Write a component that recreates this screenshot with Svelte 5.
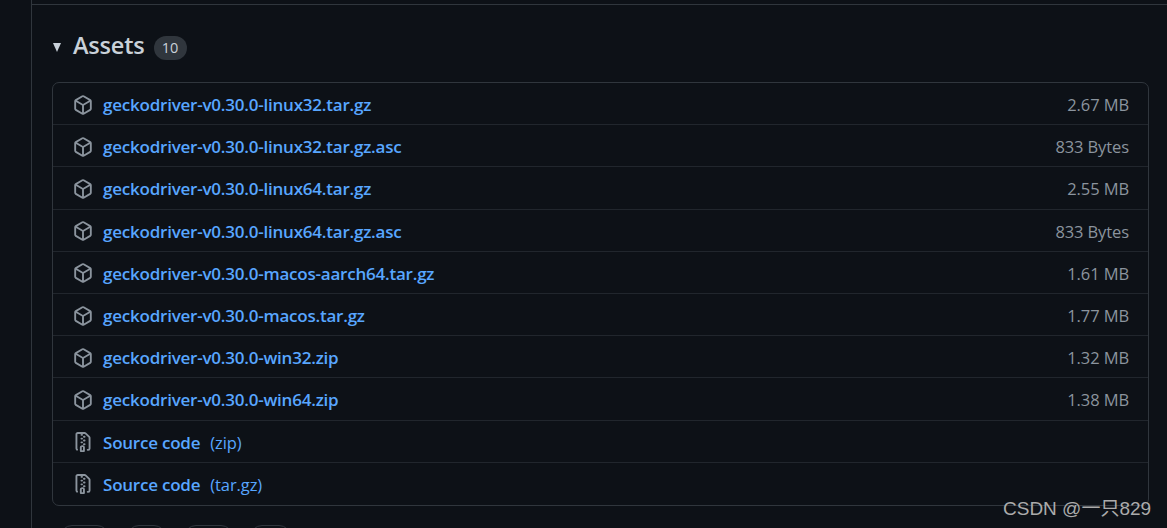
<script>
  const pkg = "M8.878.392a1.75 1.75 0 0 0-1.756 0l-5.25 3.045A1.75 1.75 0 0 0 1 4.951v6.098c0 .624.332 1.2.872 1.514l5.25 3.045a1.75 1.75 0 0 0 1.756 0l5.25-3.045c.54-.313.872-.89.872-1.514V4.951c0-.624-.332-1.2-.872-1.514L8.878.392ZM7.875 1.69a.25.25 0 0 1 .25 0l4.63 2.685L8 7.133 3.245 4.375l4.63-2.685ZM2.5 5.677v5.372c0 .09.047.171.125.216l4.625 2.683V8.432Zm6.25 8.271 4.625-2.683a.25.25 0 0 0 .125-.216V5.677L8.75 8.432Z";
  const zip = "M3.5 1.75v11.5c0 .09.048.173.126.217a.75.75 0 0 1-.752 1.298A1.748 1.748 0 0 1 2 13.25V1.75C2 .784 2.784 0 3.75 0h5.586c.464 0 .909.185 1.237.513l2.914 2.914c.329.328.513.773.513 1.237v8.586A1.75 1.75 0 0 1 12.25 15h-.5a.75.75 0 0 1 0-1.5h.5a.25.25 0 0 0 .25-.25V4.664a.25.25 0 0 0-.073-.177L9.513 1.573a.25.25 0 0 0-.177-.073H7.25a.75.75 0 0 1 0 1.5h-.5a.75.75 0 0 1 0-1.5h-3a.25.25 0 0 0-.25.25Zm3.75 8.75h.5c.966 0 1.75.784 1.75 1.75v3a.75.75 0 0 1-.75.75h-2.5a.75.75 0 0 1-.75-.75v-3c0-.966.784-1.75 1.75-1.75ZM6 5.25a.75.75 0 0 1 .75-.75h.5a.75.75 0 0 1 0 1.5h-.5A.75.75 0 0 1 6 5.25Zm.75 2.25h.5a.75.75 0 0 1 0 1.5h-.5a.75.75 0 0 1 0-1.5ZM8 6.75A.75.75 0 0 1 8.75 6h.5a.75.75 0 0 1 0 1.5h-.5A.75.75 0 0 1 8 6.75ZM8.75 3h.5a.75.75 0 0 1 0 1.5h-.5a.75.75 0 0 1 0-1.5ZM8 9.75A.75.75 0 0 1 8.75 9h.5a.75.75 0 0 1 0 1.5h-.5A.75.75 0 0 1 8 9.75Zm-1 2.5v2.25h1v-2.25a.25.25 0 0 0-.25-.25h-.5a.25.25 0 0 0-.25.25Z";
  const assets = [
    ["geckodriver-v0.30.0-linux32.tar.gz", "2.67 MB"],
    ["geckodriver-v0.30.0-linux32.tar.gz.asc", "833 Bytes"],
    ["geckodriver-v0.30.0-linux64.tar.gz", "2.55 MB"],
    ["geckodriver-v0.30.0-linux64.tar.gz.asc", "833 Bytes"],
    ["geckodriver-v0.30.0-macos-aarch64.tar.gz", "1.61 MB"],
    ["geckodriver-v0.30.0-macos.tar.gz", "1.77 MB"],
    ["geckodriver-v0.30.0-win32.zip", "1.32 MB"],
    ["geckodriver-v0.30.0-win64.zip", "1.38 MB"]
  ];
  const sources = ["(zip)", "(tar.gz)"];
</script>

<div class="page">
  <main class="timeline">
    <div class="rule"></div>
    <section class="content">
      <h2 class="heading">
        <span class="caret"></span>
        <span class="title">Assets</span>
        <span class="counter">10</span>
      </h2>
      <ul class="box">
        {#each assets as [name, size]}
          <li class="row">
            <svg class="icon" viewBox="0 0 16 16" width="20" height="20"><path fill-rule="evenodd" d={pkg} /></svg>
            <span class="link">{name}</span>
            <span class="size">{size}</span>
          </li>
        {/each}
        {#each sources as ext}
          <li class="row">
            <svg class="icon" viewBox="0 0 16 16" width="20" height="20"><path fill-rule="evenodd" d={zip} /></svg>
            <span class="link">Source code</span>
            <span class="ext">{ext}</span>
          </li>
        {/each}
      </ul>
      <div class="reactions">
        <span class="pill p1"></span>
        <span class="pill p2"></span>
        <span class="pill p3"></span>
        <span class="pill p4"></span>
      </div>
    </section>
  </main>
  <div class="watermark">CSDN @一只829</div>
</div>

<style>
  :global(body) {
    margin: 0;
    background: #0d1117;
  }
  .page {
    position: relative;
    width: 1167px;
    height: 528px;
    overflow: hidden;
    background: #0d1117;
    font-family: "Open Sans", "Noto Sans", sans-serif;
    box-sizing: border-box;
    padding-left: 31px;
  }
  .timeline {
    height: 100%;
    padding-top: 4px;
    border-left: 1px solid #30363d;
    box-sizing: border-box;
  }
  .rule {
    height: 1px;
    background: #30363d;
  }
  .content {
    width: 1097px;
    margin-left: 20px;
  }
  .heading {
    display: flex;
    align-items: center;
    height: 30px;
    margin: 26px 0 21px;
    font-weight: 600;
    font-size: 23.5px;
    color: #c9d1d9;
  }
  .caret {
    width: 0;
    height: 0;
    margin: 3px 0 0 1px;
    border-left: 4.5px solid transparent;
    border-right: 4.5px solid transparent;
    border-top: 9px solid #c9d1d9;
  }
  .title {
    margin-left: 12px;
    margin-top: -2px;
    letter-spacing: -0.2px;
  }
  .counter {
    margin-left: 9px;
    margin-top: 3px;
    min-width: 33px;
    height: 24px;
    border-radius: 12px;
    background: #30363d;
    color: #c9d1d9;
    font-size: 14.5px;
    font-weight: 400;
    line-height: 24px;
    text-align: center;
  }
  .box {
    list-style: none;
    margin: 0;
    padding: 0;
    border: 1px solid #30363d;
    border-radius: 7px;
    height: 424px;
    box-sizing: border-box;
  }
  .row {
    display: flex;
    align-items: center;
    height: 42.2px;
    box-sizing: border-box;
    padding: 2px 19px 0 20px;
    border-top: 1px solid #21262d;
  }
  .row:first-child {
    border-top: 0;
    height: 41.2px;
  }
  .icon {
    fill: #8b949e;
    flex: none;
    margin-right: 10px;
  }
  .link {
    color: #58a6ff;
    font-size: 17px;
    font-weight: 600;
    letter-spacing: -0.22px;
  }
  .size {
    margin-left: auto;
    color: #8b949e;
    font-size: 16.5px;
    letter-spacing: -0.1px;
  }
  .ext {
    margin-left: 10px;
    color: #58a6ff;
    font-size: 16.5px;
    letter-spacing: -0.1px;
  }
  .reactions {
    display: flex;
    margin: 19px 0 0 8px;
  }
  .pill {
    display: block;
    height: 24px;
    box-sizing: border-box;
    border: 1px solid #30363d;
    border-radius: 12px;
  }
  .p1 { width: 49px; margin-right: 18px; }
  .p2 { width: 39px; margin-right: 18px; }
  .p3 { width: 49px; margin-right: 17px; }
  .p4 { width: 41px; }
  .watermark {
    position: absolute;
    left: 1003px;
    top: 497px;
    font-family: "Liberation Sans", "Noto Sans CJK SC", sans-serif;
    font-size: 19px;
    line-height: 24px;
    color: #ababab;
    white-space: nowrap;
  }
</style>
